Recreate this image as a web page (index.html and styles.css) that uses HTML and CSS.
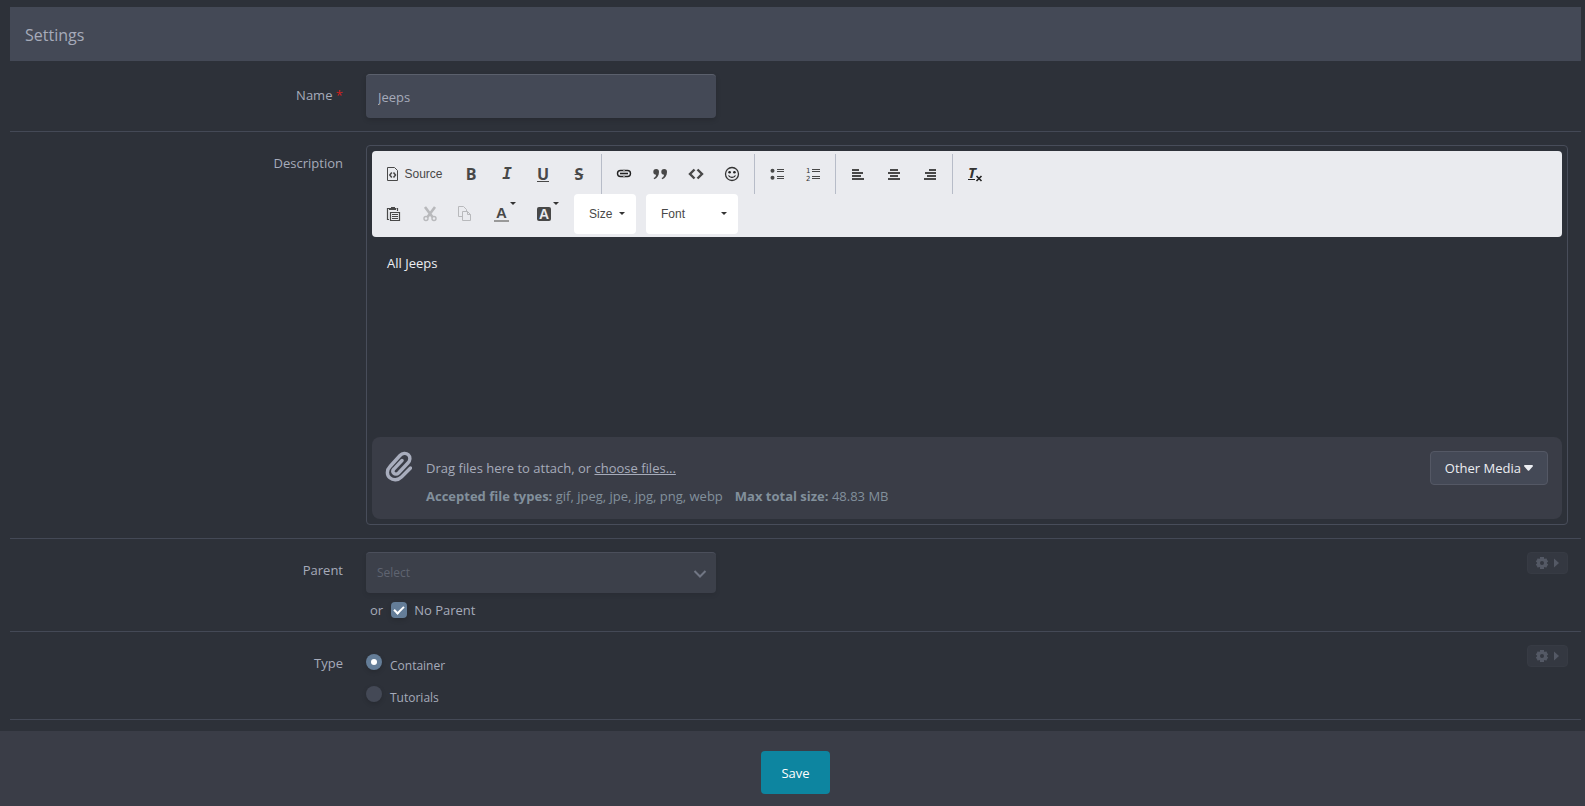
FILE: index.html
```
<!DOCTYPE html>

<html lang="en">
    <head>
        <meta charset="utf-8">
        <title>Settings</title>
        <link rel="stylesheet" href="styles.css">
    </head>
    <body>
        <form class="settings">
            <h1 class="block-header">Settings</h1>

            <div class="row row-name">
                <label class="row-label" for="name">Name <span class="required">*</span></label>
                <input class="text-input" id="name" type="text" value="Jeeps">
            </div>

            <div class="row">
                <label class="row-label" for="description">Description</label>
                <div class="editor">
                    <div class="toolbar">
                        <div class="toolbar-row">
                            <button type="button" class="tool tool-source">
                                <svg width="12" height="14" viewBox="0 0 12 14"><path d="M.5.5h7l3 3v10H.5z" fill="none" stroke="#484848"/><path d="M4.800 5.500 2.800 8l2 2.500M6.500 5.500l2 2.500-2 2.500" fill="none" stroke="#484848" stroke-width="1.500"/></svg>
                                Source
                            </button>
                            <button type="button" class="tool letter" title="Bold">B</button>
                            <button type="button" class="tool letter letter-i" title="Italic">I</button>
                            <button type="button" class="tool letter" title="Underline"><span class="letter-u">U</span></button>
                            <button type="button" class="tool letter" title="Strikethrough"><span class="letter-s">S</span></button>
                            <span class="separator"></span>
                            <button type="button" class="tool" title="Link">
                                <svg width="16" height="16" viewBox="0 0 16 16"><rect x="1.500" y="4.500" width="13" height="6" rx="3" fill="none" stroke="#222" stroke-width="1.400"/><path d="M4 7.500h8" stroke="#222" stroke-width="1.600"/><path d="M7 4.500h2M7 10.500h2" stroke="#888" stroke-width="1.400"/></svg>
                            </button>
                            <button type="button" class="tool" title="Quote">
                                <svg width="16" height="16" viewBox="0 0 16 16"><path d="M4.200 3a2.900 2.900 0 0 1 2.800 3c0 3.500-1.800 6.200-4.800 7.200l-.6-1.100c1.500-.8 2.300-1.900 2.500-3.400A2.800 2.800 0 0 1 1.300 6a2.900 2.900 0 0 1 2.900-3zM12.200 3A2.900 2.900 0 0 1 15 6c0 3.500-1.800 6.200-4.800 7.200l-.6-1.100c1.500-.8 2.300-1.900 2.500-3.400A2.800 2.800 0 0 1 9.300 6a2.900 2.900 0 0 1 2.900-3z" fill="#484848"/></svg>
                            </button>
                            <button type="button" class="tool" title="Code">
                                <svg width="16" height="16" viewBox="0 0 16 16"><path d="M6.500 3.500 2 8l4.500 4.500M9.500 3.500 14 8l-4.500 4.500" fill="none" stroke="#484848" stroke-width="2.400"/></svg>
                            </button>
                            <button type="button" class="tool" title="Smileys">
                                <svg width="16" height="16" viewBox="0 0 16 16"><circle cx="8" cy="8" r="6.500" fill="none" stroke="#333" stroke-width="1.300"/><circle cx="5.600" cy="6.200" r="1.300" fill="#222"/><circle cx="10.400" cy="6.200" r="1.300" fill="#222"/><path d="M4.500 9.500c1.500 2.500 5.500 2.500 7 0" fill="none" stroke="#222" stroke-width="1.200"/></svg>
                            </button>
                            <span class="separator"></span>
                            <button type="button" class="tool" title="Bulleted list">
                                <svg width="16" height="16" viewBox="0 0 16 16"><circle cx="3.500" cy="4.700" r="2" fill="#484848"/><circle cx="3.500" cy="11.700" r="2" fill="#484848"/><path d="M8 3.500h7M8 5.500h7M8 10.500h7M8 12.500h7" stroke="#484848"/></svg>
                            </button>
                            <button type="button" class="tool" title="Numbered list">
                                <svg width="16" height="16" viewBox="0 0 16 16"><path d="M7 3.500h8M7 5.500h8M7 10.500h8M7 12.500h8" stroke="#484848"/><text x="1" y="7" class="list-number">1</text><text x="1" y="15" class="list-number">2</text></svg>
                            </button>
                            <span class="separator"></span>
                            <button type="button" class="tool" title="Align left">
                                <svg width="16" height="16" viewBox="0 0 16 16"><path d="M2 3h7v2H2zM2 6h11v2H2zM2 9h9v2H2zM2 12h12v2H2z" fill="#484848"/></svg>
                            </button>
                            <button type="button" class="tool" title="Center">
                                <svg width="16" height="16" viewBox="0 0 16 16"><path d="M4 3h8v2H4zM2 6h12v2H2zM4 9h8v2H4zM2 12h12v2H2z" fill="#484848"/></svg>
                            </button>
                            <button type="button" class="tool" title="Align right">
                                <svg width="16" height="16" viewBox="0 0 16 16"><path d="M7 3h7v2H7zM3 6h11v2H3zM5 9h9v2H5zM2 12h12v2H2z" fill="#484848"/></svg>
                            </button>
                            <span class="separator"></span>
                            <button type="button" class="tool" title="Remove format">
                                <svg width="16" height="16" viewBox="0 0 16 16"><text x="1" y="12" class="clear-letter">T</text><path d="M1 13.500h7" stroke="#222"/><path d="m9.500 10 5 5M14.500 10l-5 5" stroke="#222" stroke-width="1.600"/></svg>
                            </button>
                        </div>
                        <div class="toolbar-row">
                            <button type="button" class="tool" title="Paste">
                                <svg width="16" height="16" viewBox="0 0 16 16"><path d="M4 2.500H2.500v11H4M11.500 2.500h1V5" fill="none" stroke="#484848" stroke-width="1.200"/><path d="M4 2h2V1h4v1h1v2H4z" fill="#484848"/><path d="M5.500 6.500h9v8h-9z" fill="none" stroke="#484848" stroke-width="1.200"/><path d="M7 8.500h6M7 10.500h6M7 12.500h6" stroke="#484848"/></svg>
                            </button>
                            <button type="button" class="tool" title="Cut" disabled>
                                <svg width="16" height="16" viewBox="0 0 16 16"><path d="m4 1 7.500 10M14 1 6.500 11" stroke="#484848" stroke-width="2.600"/><circle cx="5" cy="12.500" r="2" fill="none" stroke="#484848" stroke-width="1.400"/><circle cx="13" cy="12.500" r="2" fill="none" stroke="#484848" stroke-width="1.400"/></svg>
                            </button>
                            <button type="button" class="tool" title="Copy" disabled>
                                <svg width="16" height="16" viewBox="0 0 16 16"><path d="M5 10.500H1.500v-10h5l3 3V5" fill="none" stroke="#484848"/><path d="M5.500 5.500h5l3 3v6h-8zM10.500 5.500v3h3" fill="none" stroke="#484848"/></svg>
                            </button>
                            <button type="button" class="tool tool-color" title="Text color"><span class="text-color">A</span></button>
                            <button type="button" class="tool tool-color" title="Background color"><span class="back-color">A</span></button>
                            <span class="combo combo-size">
                                <select aria-label="Size"><option>Size</option></select>
                            </span>
                            <span class="combo combo-font">
                                <select aria-label="Font"><option>Font</option></select>
                            </span>
                        </div>
                    </div>

                    <textarea class="editor-text" id="description" spellcheck="false">All Jeeps</textarea>

                    <div class="upload">
                        <svg class="clip" width="28" height="32" viewBox="0 0 28 32"><path d="M26.500 17 17.500 26c-3.500 3.500-8.500 3.500-11.700.8s-3.300-7.800.2-11.300L16 4.500c2.400-2.600 6-2.900 8.300-.7s2 5.700-.4 8.200L14.500 22c-1.500 1.500-3.500 1.500-4.700.3s-1.200-3 .3-4.500L18 9.500" fill="none" stroke="#a8adbd" stroke-width="3.400" stroke-linecap="round" stroke-linejoin="round"/></svg>
                        <div class="upload-info">
                            <p>Drag files here to attach, or <a href="#">choose files...</a></p>
                            <p class="upload-limits"><span><b>Accepted file types:</b> gif, jpeg, jpe, jpg, png, webp</span><span><b>Max total size:</b> 48.83 MB</span></p>
                        </div>
                        <button type="button" class="media-button">
                            Other Media
                            <svg width="9" height="6" viewBox="0 0 9 6"><path d="M1 0h7a1 1 0 0 1 .7 1.500L5.200 5.500a1 1 0 0 1-1.400 0L.3 1.500A1 1 0 0 1 1 0z" fill="#eceef2"/></svg>
                        </button>
                    </div>
                </div>
            </div>

            <div class="row">
                <label class="row-label" for="parent">Parent</label>
                <div class="row-content">
                    <div class="select-wrap">
                        <select class="parent-select" id="parent" disabled><option>Select</option></select>
                        <svg class="chevron" width="14" height="8" viewBox="0 0 14 8"><path d="m1.500 1 5.500 5.500L12.500 1" fill="none" stroke="#717684" stroke-width="2"/></svg>
                    </div>
                    <div class="no-parent">
                        <span>or</span>
                        <input class="check" id="no-parent" type="checkbox" checked>
                        <label for="no-parent">No Parent</label>
                    </div>
                </div>
                <button type="button" class="gear-button" title="Batch change">
                    <svg width="25" height="14" viewBox="0 0 25 14"><g fill="#545965"><path d="M5 1h4v3H5zM5 10h4v3H5z"/><path d="M5 1h4v3H5zM5 10h4v3H5z" transform="rotate(60 7 7)"/><path d="M5 1h4v3H5zM5 10h4v3H5z" transform="rotate(120 7 7)"/><path d="M19 2.500v9l5-4.500z"/></g><circle cx="7" cy="7" r="3.500" fill="none" stroke="#545965" stroke-width="3"/></svg>
                </button>
            </div>

            <div class="row">
                <span class="row-label">Type</span>
                <div class="row-content types">
                    <div class="type">
                        <input class="radio" id="container" type="radio" name="type" checked>
                        <label for="container">Container</label>
                    </div>
                    <div class="type">
                        <input class="radio" id="tutorials" type="radio" name="type">
                        <label for="tutorials">Tutorials</label>
                    </div>
                </div>
                <button type="button" class="gear-button" title="Batch change">
                    <svg width="25" height="14" viewBox="0 0 25 14"><g fill="#545965"><path d="M5 1h4v3H5zM5 10h4v3H5z"/><path d="M5 1h4v3H5zM5 10h4v3H5z" transform="rotate(60 7 7)"/><path d="M5 1h4v3H5zM5 10h4v3H5z" transform="rotate(120 7 7)"/><path d="M19 2.500v9l5-4.500z"/></g><circle cx="7" cy="7" r="3.500" fill="none" stroke="#545965" stroke-width="3"/></svg>
                </button>
            </div>

            <div class="footer">
                <button type="submit" class="save">Save</button>
            </div>
        </form>
    </body>
</html>
```
FILE: styles.css
```
* {
    box-sizing: border-box;
}
html {
    background-color: #2d3139;
}
body {
    margin: 0;
    padding-top: 7px;
    background-color: #2d3139;
    color: #a6abba;
    font-family: "Open Sans", "Noto Sans", sans-serif;
    font-size: 13px;
    line-height: 20px;
}
button, input, select, textarea {
    font: inherit;
    color: inherit;
    margin: 0;
}
button svg {
    display: block;
    overflow: visible;
}
p {
    margin: 0;
}
.block-header {
    margin: 0 4px 0 10px;
    padding: 16px 15px 14px;
    background-color: #444956;
    font-size: 16px;
    font-weight: 400;
    line-height: 24px;
}

/* Form rows */
.row {
    display: flex;
    align-items: flex-start;
    margin: 0 4px 0 10px;
    padding: 13px 13px 13px 0;
    border-bottom: 1px solid #444956;
}
.row-name {
    align-items: center;
}
.row-label {
    width: 356px;
    flex-shrink: 0;
    padding: 8px 23px 0 0;
    text-align: right;
}
.row-name .row-label {
    padding: 0 23px 2px 0;
}
.row-content {
    flex: 1;
}
.required {
    color: #d0201c;
}
.text-input {
    width: 350px;
    height: 44px;
    padding: 0 12px;
    background-color: #444956;
    border: 0;
    border-top: 1px solid #5b606c;
    border-radius: 4px;
    box-shadow: 0 2px 5px #00000026;
}

/* Editor */
.editor {
    flex: 1;
    padding: 5px;
    border: 1px solid #484d5a;
    border-radius: 4px;
}
.toolbar {
    padding: 3px;
    background-color: #eaebef;
    border-radius: 4px;
    color: #484848;
    font-family: "Liberation Sans", Arial, sans-serif;
    font-size: 12px;
}
.toolbar-row {
    display: flex;
    height: 40px;
}
.tool {
    display: flex;
    align-items: center;
    justify-content: center;
    width: 36px;
    padding: 0;
    background: none;
    border: 0;
}
.tool:disabled {
    opacity: 0.3;
}
.tool-source {
    gap: 5px;
    width: 78px;
    padding-left: 2px;
}
.letter {
    font-family: "Open Sans", sans-serif;
    font-size: 16px;
    font-weight: 700;
}
.letter-i {
    font-family: "DejaVu Sans Mono", monospace;
    font-style: italic;
}
.letter-u {
    line-height: 14px;
    border-bottom: 1px solid #484848;
}
.letter-s {
    text-decoration: line-through;
}
.separator {
    width: 1px;
    margin: 0 4px;
    background-color: #b7bcc8;
}
.list-number {
    fill: #333;
    font-family: "DejaVu Sans", sans-serif;
    font-size: 7px;
}
.clear-letter {
    fill: #333;
    font-family: "Open Sans", sans-serif;
    font-size: 15px;
    font-style: italic;
    font-weight: 700;
}
.tool-color {
    position: relative;
    justify-content: flex-start;
    width: 43px;
    padding-left: 11px;
    font-weight: 700;
}
.tool-color::after, .combo::after {
    content: "";
    position: absolute;
    top: 8px;
    right: 10px;
    border: 3px solid transparent;
    border-top-color: #333;
    border-bottom: 0;
}
.text-color {
    width: 15px;
    border-bottom: 2px solid #999;
    font-size: 15px;
    line-height: 14px;
}
.back-color {
    width: 14px;
    background-color: #484848;
    border-radius: 2px;
    color: #eaebef;
    font-size: 14px;
    line-height: 14px;
}
.combo {
    position: relative;
    margin-left: 10px;
}
.combo-size {
    width: 62px;
    margin-left: 5px;
}
.combo-font {
    width: 92px;
}
.combo::after {
    top: 18px;
    right: 11px;
}
.combo select {
    appearance: none;
    width: 100%;
    height: 40px;
    padding: 0 15px;
    background-color: #fff;
    border: 0;
    border-radius: 4px;
}
.editor-text {
    display: block;
    width: 100%;
    height: 200px;
    padding: 16px 15px;
    background: none;
    border: 0;
    outline: none;
    resize: none;
    color: #eceef2;
}
.upload {
    display: flex;
    align-items: flex-start;
    padding: 14px 14px 13px 12px;
    background-color: #3a3d47;
    border-radius: 8px;
}
.upload-info {
    flex: 1;
    padding: 7px 0 0 14px;
}
.upload-info a {
    color: inherit;
}
.upload-limits {
    display: flex;
    gap: 12px;
    margin-top: 8px;
    color: #82909c;
}
.media-button {
    display: flex;
    align-items: center;
    gap: 3px;
    height: 34px;
    padding: 0 14px;
    background-color: #444956;
    border: 1px solid #545865;
    border-radius: 4px;
    color: #eceef2;
}

/* Parent and type */
.select-wrap {
    position: relative;
    width: 350px;
}
.parent-select {
    display: block;
    appearance: none;
    width: 100%;
    height: 41px;
    padding: 0 11px;
    background-color: #3c404a;
    border: 0;
    border-top: 1px solid #4b4f5b;
    border-radius: 4px;
    box-shadow: 0 2px 5px #00000018;
    color: #5f6471;
    font-size: 12px;
    opacity: 1;
}
.chevron {
    position: absolute;
    top: 18px;
    right: 9px;
}
.no-parent {
    display: flex;
    align-items: center;
    height: 16px;
    margin-top: 9px;
    padding-left: 4px;
}
.check, .radio {
    display: grid;
    place-items: center;
    appearance: none;
    width: 16px;
    height: 16px;
    background-color: #444956;
    box-shadow: 0 2px 5px #00000026;
}
.check {
    margin: 0 7px 0 8px;
    border-radius: 4px;
}
.check:checked, .radio:checked {
    background-color: #647d98;
}
.check:checked::after {
    content: "";
    width: 8px;
    height: 4px;
    margin-bottom: 2px;
    border: solid #fff;
    border-width: 0 0 2px 2px;
    rotate: -45deg;
}
.radio {
    border-radius: 50%;
}
.radio:checked::after {
    content: "";
    width: 6px;
    height: 6px;
    background-color: #fff;
    border-radius: 50%;
}
.types {
    display: grid;
    gap: 3px;
}
.type {
    display: flex;
    gap: 8px;
    padding-top: 9px;
    font-size: 12px;
    line-height: 16px;
}
.type label {
    margin-top: 4px;
}
.gear-button {
    height: 22px;
    padding: 0 7px;
    background-color: #343841;
    border: 1px solid #373b44;
    border-radius: 4px;
}

/* Footer */
.footer {
    display: flex;
    justify-content: center;
    margin-top: 11px;
    padding: 20px 4px 12px 10px;
    background-color: #3a3d47;
}
.save {
    height: 43px;
    padding: 0 20px;
    background-color: #0d85a0;
    border: 0;
    border-radius: 4px;
    color: #fff;
}
```
